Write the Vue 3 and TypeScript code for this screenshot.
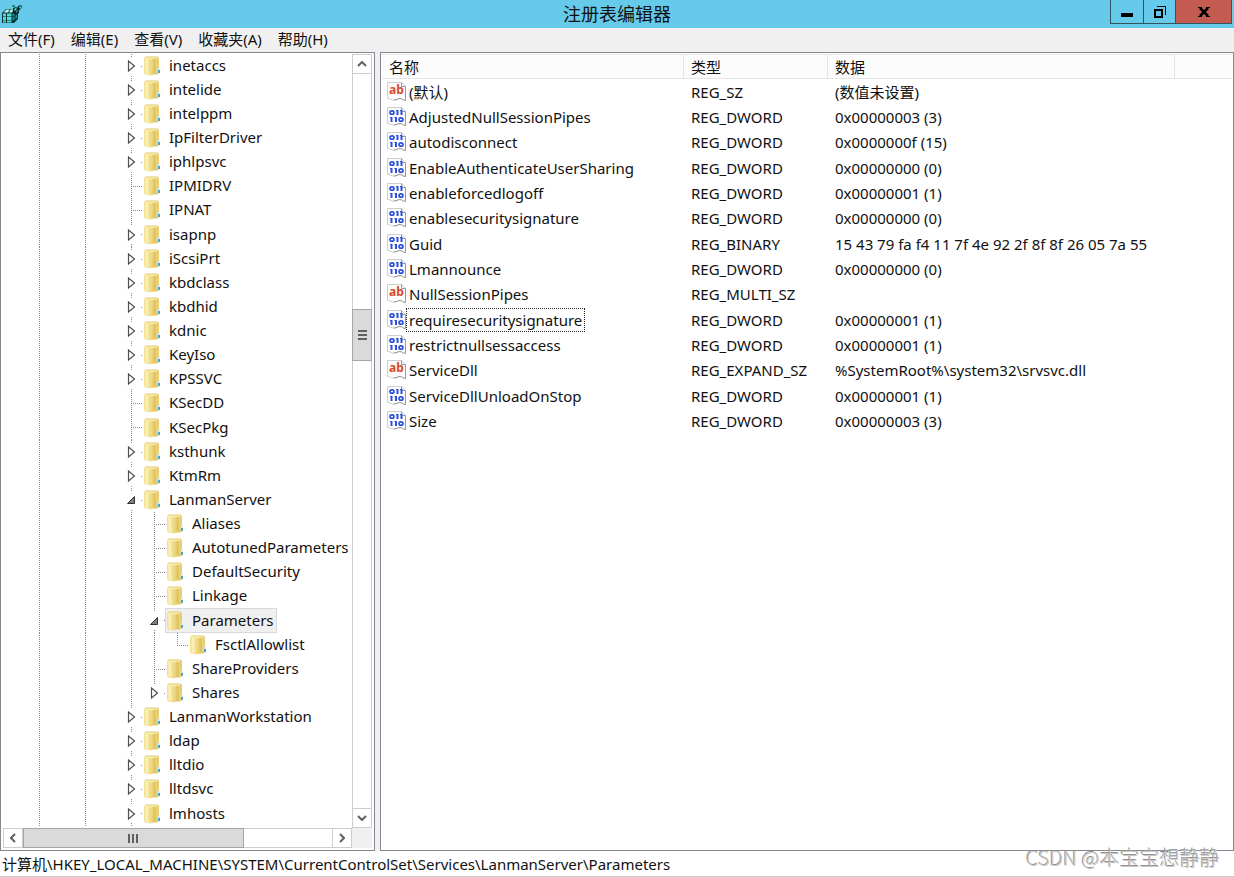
<script setup lang="ts">
interface TreeItem { name: string; depth: number; state: 'open' | 'closed' | 'leaf'; last?: boolean; selected?: boolean }
interface RegValue { name: string; type: string; data: string; focused?: boolean }

const menus: string[] = ['文件(F)', '编辑(E)', '查看(V)', '收藏夹(A)', '帮助(H)']

const leaf = (name: string, depth = 0, last = false): TreeItem => ({ name, depth, state: 'leaf', last })
const closed = (name: string, depth = 0, last = false): TreeItem => ({ name, depth, state: 'closed', last })

const tree: TreeItem[] = [
  closed('inetaccs'), closed('intelide'), closed('intelppm'), closed('IpFilterDriver'), closed('iphlpsvc'),
  leaf('IPMIDRV'), leaf('IPNAT'),
  closed('isapnp'), closed('iScsiPrt'), closed('kbdclass'), closed('kbdhid'), closed('kdnic'), closed('KeyIso'), closed('KPSSVC'),
  leaf('KSecDD'), leaf('KSecPkg'),
  closed('ksthunk'), closed('KtmRm'),
  { name: 'LanmanServer', depth: 0, state: 'open' },
  leaf('Aliases', 1), leaf('AutotunedParameters', 1), leaf('DefaultSecurity', 1), leaf('Linkage', 1),
  { name: 'Parameters', depth: 1, state: 'open', selected: true },
  leaf('FsctlAllowlist', 2, true),
  leaf('ShareProviders', 1), closed('Shares', 1, true),
  closed('LanmanWorkstation'), closed('ldap'), closed('lltdio'), closed('lltdsvc'), closed('lmhosts'),
]

const values: RegValue[] = [
  { name: '(默认)', type: 'REG_SZ', data: '(数值未设置)' },
  { name: 'AdjustedNullSessionPipes', type: 'REG_DWORD', data: '0x00000003 (3)' },
  { name: 'autodisconnect', type: 'REG_DWORD', data: '0x0000000f (15)' },
  { name: 'EnableAuthenticateUserSharing', type: 'REG_DWORD', data: '0x00000000 (0)' },
  { name: 'enableforcedlogoff', type: 'REG_DWORD', data: '0x00000001 (1)' },
  { name: 'enablesecuritysignature', type: 'REG_DWORD', data: '0x00000000 (0)' },
  { name: 'Guid', type: 'REG_BINARY', data: '15 43 79 fa f4 11 7f 4e 92 2f 8f 8f 26 05 7a 55' },
  { name: 'Lmannounce', type: 'REG_DWORD', data: '0x00000000 (0)' },
  { name: 'NullSessionPipes', type: 'REG_MULTI_SZ', data: '' },
  { name: 'requiresecuritysignature', type: 'REG_DWORD', data: '0x00000001 (1)', focused: true },
  { name: 'restrictnullsessaccess', type: 'REG_DWORD', data: '0x00000001 (1)' },
  { name: 'ServiceDll', type: 'REG_EXPAND_SZ', data: '%SystemRoot%\\system32\\srvsvc.dll' },
  { name: 'ServiceDllUnloadOnStop', type: 'REG_DWORD', data: '0x00000001 (1)' },
  { name: 'Size', type: 'REG_DWORD', data: '0x00000003 (3)' },
]

const isText = (v: RegValue): boolean => v.type.endsWith('SZ')
</script>

<template>
  <div class="window">
    <header class="titlebar">
      <svg class="app-icon" width="20" height="20" viewBox="0 0 20 20" aria-hidden="true">
        <path d="M0 9 4 5h7l5 3v7l-4 4H0z" fill="#0a3438" />
        <path d="M1 9.500h3v3H1zM5 9.500h4.500v3H5zM1 13h3v3H1zM5 13h4.500v3H5zM1 16.500h3v2H1zM5 16.500h4.500v2H5z" fill="#4fd9d0" />
        <path d="M4.500 5.500h3L6 8.500H1.500zM8.500 5.500h3L10 8.500H7z" fill="#b9f5f0" />
        <path d="m10.500 10 2-2v3l-2 2zM10.500 14l2-2v3l-2 2zM13.500 11l1.500-1v4l-1.500 1z" fill="#1c8f90" />
        <path d="m11 4 3-1 3 2v4l-3 2-3-2zM16 2l3-1 1 2-2 3-3-1z" fill="#08292c" />
        <path d="m12 5 2-1 1 1-2 2zM17 3l2-1v2l-1 1zM15 6l1 1-2 2z" fill="#48dcd6" />
        <path d="M10 1h3v2h-3z" fill="#178b8b" />
      </svg>
      <h1>注册表编辑器</h1>
      <div class="controls">
        <button type="button" class="min" aria-label="最小化">
          <svg width="14" height="12" viewBox="0 0 14 12"><path d="M1 7h12v4H1z" fill="#000" /></svg>
        </button>
        <button type="button" class="max" aria-label="还原">
          <svg width="14" height="14" viewBox="0 0 14 14" fill="none" stroke="#000"><path d="M2 5h7v7H2z" stroke-width="2" /><path d="M4 1.500h8.500V10" /></svg>
        </button>
        <button type="button" class="close" aria-label="关闭">
          <svg width="12" height="12" viewBox="0 0 12 12" stroke="#000" stroke-width="2.500"><path d="m2 2 8 8M10 2l-8 8" /><path d="M0 1.500h4M8 1.500h4M0 10.500h4M8 10.500h4" stroke-width="1" /></svg>
        </button>
      </div>
    </header>

    <nav class="menubar">
      <button v-for="m in menus" :key="m" type="button">{{ m }}</button>
    </nav>

    <main class="panes">
      <section class="pane tree-pane">
        <ul class="tree">
          <li v-for="item in tree" :key="item.name" class="node">
            <span class="guide line"></span><span class="guide"></span><span class="guide line"></span><span class="guide"></span>
            <span v-for="d in item.depth" :key="d" class="guide line"></span>
            <span class="guide branch" :class="{ last: item.last }">
              <svg v-if="item.state !== 'leaf'" class="twisty" width="17" height="18" viewBox="0 0 17 18">
                <path v-if="item.state === 'closed'" d="M5.500 4v10l6-5z" fill="#fff" stroke="#505050" stroke-width="1.200" />
                <path v-else d="M11.500 5.500v7h-7z" fill="#808080" stroke="#303030" />
              </svg>
            </span>
            <span class="label" :class="{ selected: item.selected }">
              <svg class="folder" width="18" height="20" viewBox="0 0 18 20">
                <defs>
                  <linearGradient id="flap"><stop offset="0" stop-color="#f1de8c" /><stop offset=".45" stop-color="#fbf3bc" /><stop offset="1" stop-color="#ecd57c" /></linearGradient>
                  <linearGradient id="inner"><stop offset="0" stop-color="#f3e394" /><stop offset="1" stop-color="#dcbc54" /></linearGradient>
                </defs>
                <path d="M2 .5h12.500L16 2v15l-1.500 1.500H2z" fill="#e6cb6c" />
                <path d="M3 1.500h11V4H3z" fill="#f7eeb4" />
                <path d="M12 3h3v14h-3z" fill="#e9d07a" />
                <path d="M7 3.500 12.500 2.500v15L7 19.500z" fill="url(#inner)" />
                <path d="M1 2 2.500 1l5 2.500V19.500L1 17.500z" fill="url(#flap)" />
                <path d="M15 11.500h2v3h-2z" fill="#d9ecf5" /><path d="M15 14h2v3h-2z" fill="#45a5dc" />
              </svg>
              <span class="text">{{ item.name }}</span>
            </span>
          </li>
        </ul>
        <div class="vbar">
          <button type="button" aria-label="向上滚动"><svg width="10" height="6" viewBox="0 0 10 6"><path d="m1 5 4-4 4 4" /></svg></button>
          <div class="vspace"></div>
          <div class="thumb vthumb"><i></i><i></i><i></i></div>
          <div class="vspace after"></div>
          <button type="button" aria-label="向下滚动"><svg width="10" height="6" viewBox="0 0 10 6"><path d="m1 1 4 4 4-4" /></svg></button>
        </div>
        <div class="hbar">
          <button type="button" aria-label="向左滚动"><svg width="6" height="10" viewBox="0 0 6 10"><path d="M5 1 1 5l4 4" /></svg></button>
          <div class="thumb hthumb"><i></i><i></i><i></i></div>
          <div class="hspace"></div>
          <button type="button" aria-label="向右滚动"><svg width="6" height="10" viewBox="0 0 6 10"><path d="m1 1 4 4-4 4" /></svg></button>
        </div>
        <div class="corner"></div>
      </section>

      <section class="pane list-pane">
        <table>
          <colgroup><col class="c-name" /><col class="c-type" /><col class="c-data" /><col /></colgroup>
          <thead>
            <tr><th>名称</th><th>类型</th><th>数据</th><th></th></tr>
          </thead>
          <tbody>
            <tr v-for="v in values" :key="v.name">
              <td class="name">
                <div class="entry">
                  <svg width="20" height="20" viewBox="0 0 20 20">
                    <path d="M.5 .5h14l4 4v14c-3 0-3-2-5.500-2s-3 1.500-6 1.500-3.500-1.500-6.500-1.500z" fill="#fcfcfc" stroke="#cdcdcd" />
                    <path d="M14.500 .5v4h4M18.500 4.500v14c-3 0-3-2-5.500-2s-3 1.500-6 1.500" fill="none" stroke="#9a9a9a" />
                    <text v-if="isText(v)" x="2" y="12" class="ab">ab</text>
                    <g v-else fill="none" stroke="#2c50dc">
                      <ellipse cx="5" cy="5.500" rx="2" ry="1.700" stroke-width="1.700" />
                      <ellipse cx="14" cy="12.500" rx="2" ry="1.700" stroke-width="1.700" />
                      <path d="M10.500 3v5M14.500 3v5M4.500 10v5M9 10v5" stroke-width="2" />
                      <path d="M9 3.500h1M13 3.500h1M3 10.500h1M7.500 10.500h1" stroke-width="1" />
                    </g>
                  </svg>
                  <span :class="{ focused: v.focused }">{{ v.name }}</span>
                </div>
              </td>
              <td>{{ v.type }}</td>
              <td>{{ v.data }}</td>
              <td></td>
            </tr>
          </tbody>
        </table>
      </section>
    </main>

    <footer class="status">计算机\HKEY_LOCAL_MACHINE\SYSTEM\CurrentControlSet\Services\LanmanServer\Parameters</footer>
    <div class="watermark">CSDN @本宝宝想静静</div>
  </div>
</template>

<style>
body { margin: 0; }
</style>

<style scoped>
.window {
  position: relative;
  display: flex;
  flex-direction: column;
  height: 100vh;
  overflow: hidden;
  background: #f0f0f0;
  color: #111;
  font: 15px/20px "Noto Sans", "Noto Sans CJK SC", sans-serif;
}
button { box-sizing: border-box; margin: 0; padding: 0; border: 0; background: none; color: inherit; font: inherit; }

.titlebar { display: flex; align-items: center; height: 28px; flex: none; background: #66cbea; }
.app-icon { margin-left: 2px; }
h1 { flex: 1; margin: 0; padding-left: 102px; text-align: center; font-size: 18px; line-height: 28px; font-weight: 400; }
.controls { display: flex; align-self: flex-start; height: 23px; margin-right: 2px; border: solid #35545e; border-width: 0 1px 1px; }
.controls button { display: grid; place-items: center; width: 33px; border-right: 1px solid #35545e; }
.controls .max { width: 32px; }
.controls .close { width: 55px; border-right: 0; background: #c35b51; }

.menubar { display: flex; gap: 16px; height: 24px; padding-left: 8px; flex: none; }
.menubar button { padding-bottom: 2px; white-space: nowrap; }

.panes { flex: 1; min-height: 0; display: flex; gap: 5px; }
.pane { box-sizing: border-box; border: 1px solid #828790; background: #fff; }
.tree-pane {
  display: grid;
  grid-template: minmax(0, 1fr) 20px / minmax(0, 1fr) 20px;
  width: 375px;
  flex: none;
  padding: 1px 2px 2px 1px;
}
.tree { margin: 0; padding: 0 0 0 26px; list-style: none; overflow: hidden; }
.node { display: flex; align-items: stretch; height: 24px; }
.node:nth-child(8n) { height: 25px; }
.guide { width: 23px; flex: none; }
.line { background: repeating-linear-gradient(#8a8a8a 0 1px, transparent 1px 2px) 11px 0 / 1px 100% no-repeat; }
.branch {
  display: flex;
  align-items: center;
  padding-left: 3px;
  box-sizing: border-box;
  background:
    repeating-linear-gradient(#8a8a8a 0 1px, transparent 1px 2px) 11px 0 / 1px 100% no-repeat,
    repeating-linear-gradient(90deg, #8a8a8a 0 1px, transparent 1px 2px) 11px 12px / 12px 1px no-repeat;
}
.branch.last { background-size: 1px 12px, 12px 1px; }
.twisty { background: #fff; }
.label { display: flex; align-items: center; gap: 8px; box-sizing: border-box; margin-left: -1px; padding: 0 2px 0 0; border: 1px solid transparent; white-space: nowrap; }
.label.selected { border-color: #d9d9d9; background: #f0f0f0; }
.text { padding-bottom: 2px; }
.folder { flex: none; }

.vbar { display: flex; flex-direction: column; border: solid #cdcdcd; border-width: 0 1px; }
.vbar button, .hbar button { display: grid; place-items: center; flex: none; border: 1px solid #cdcdcd; background: #fff; }
.vbar button { height: 20px; border-width: 1px 0; }
.vbar svg, .hbar svg { fill: none; stroke: #606060; stroke-width: 2; }
.vspace { flex: 235; }
.vspace.after { flex: 447; }
.thumb { display: flex; align-items: center; justify-content: center; gap: 2px; box-sizing: border-box; border: 1px solid #a6a6a6; background: #dadada; }
.vthumb { flex-direction: column; height: 52px; margin: 0 -1px; }
.vthumb i { width: 9px; height: 2px; background: #606060; }
.hbar { display: flex; box-sizing: border-box; border: solid #cdcdcd; border-width: 1px 0; margin-left: 1px; }
.hbar button { width: 20px; border-width: 0 1px; }
.hthumb { flex: 220; margin: -1px 0; }
.hthumb i { width: 2px; height: 9px; background: #606060; }
.hspace { flex: 89; }
.corner { background: #f0f0f0; }

.list-pane { flex: 1; min-width: 0; overflow: hidden; padding: 1px; }
table { width: 100%; border-collapse: separate; border-spacing: 0; table-layout: fixed; }
.c-name { width: 302px; }
.c-type { width: 144px; }
.c-data { width: 347px; }
th { box-sizing: border-box; height: 25px; padding: 0 7px; border: solid #e5e5e5; border-width: 1px 1px 1px 0; background: #fcfcfc; text-align: left; font-weight: 400; line-height: 20px; }
th:last-child { border-right: 0; }
td { height: 25px; padding: 0 7px; line-height: 20px; white-space: nowrap; }
tbody tr:nth-child(3n) td { height: 26px; }
td.name { padding: 0 0 0 5px; }
.entry { display: flex; align-items: center; }
.entry span { padding: 1px 2px; }
.entry .focused { margin-left: -1px; border: 1px dotted #222; }
.ab { font: bold 12px "Noto Sans", sans-serif; fill: #d8492c; }

.status { box-sizing: border-box; height: 26px; flex: none; padding: 3px 2px 0; border-bottom: 1px solid #c8c8c8; background: #fff; white-space: nowrap; }
.watermark { position: absolute; right: 14px; bottom: 6px; color: #c8c8c8; font: 300 20px/26px "Noto Sans CJK SC", sans-serif; text-shadow: -1px -1px 0 #909090; }
</style>
